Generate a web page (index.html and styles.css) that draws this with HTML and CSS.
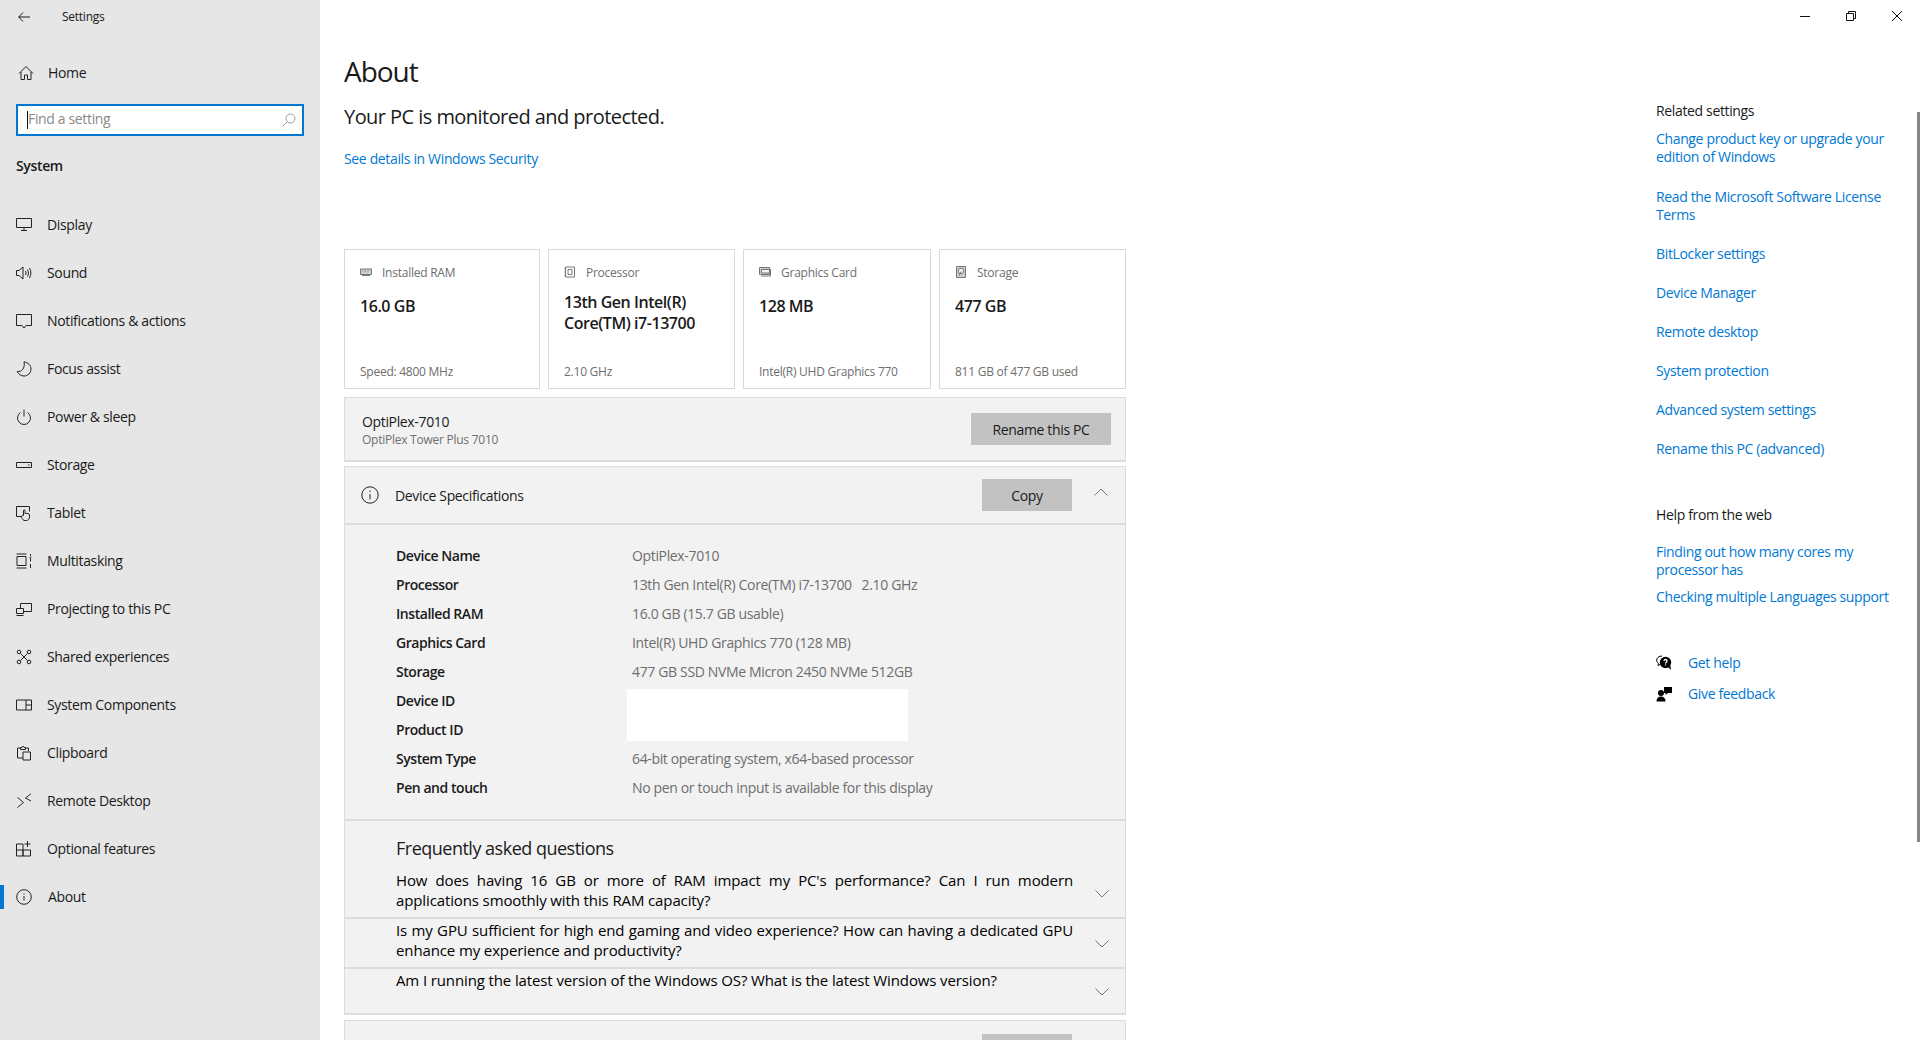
FILE: index.html
```html
<!DOCTYPE html>
<html lang="en">
<head>
<meta charset="utf-8">
<title>Settings</title>
<link rel="stylesheet" href="styles.css">
</head>
<body>
<aside class="sidebar">
  <div class="titlebar">
    <svg class="back" viewBox="0 0 12 10"><path d="M12 5H.7M5 .5.7 5 5 9.5"/></svg>
    <span>Settings</span>
  </div>
  <a class="nav home"><svg class="ni" viewBox="0 0 16 16"><path d="M1 8.500 8 1.500l7 7M3 7v7.500h3.500V10h3v4.500H13V7"/></svg><span>Home</span></a>
  <div class="search"><span class="caret"></span><span class="ph">Find a setting</span><svg class="si" viewBox="0 0 14 14"><circle cx="8.500" cy="5.500" r="4.500"/><path d="M5.200 8.800.8 13.200"/></svg></div>
  <div class="group">System</div>
  <nav class="navlist">
    <a class="nav"><svg class="ni" viewBox="0 0 16 16"><path d="M.5 1.500h15v9H.5zM8 10.500V13M5 13.500h6"/></svg><span>Display</span></a>
    <a class="nav"><svg class="ni" viewBox="0 0 16 16"><path d="M.5 5.500h2.500L7 2v12L3 10.500H.5zM9.500 6c.7 1.300.7 2.700 0 4M11.500 4.500c1.300 2.200 1.300 4.800 0 7M13.500 3c1.900 3.200 1.900 6.800 0 10"/></svg><span>Sound</span></a>
    <a class="nav"><svg class="ni" viewBox="0 0 16 16"><path d="M.5 1.500h15v11H10l-2 2.500-2-2.500H.5z"/></svg><span>Notifications &amp; actions</span></a>
    <a class="nav"><svg class="ni" viewBox="0 0 16 16"><path d="M8 .8c4 .7 7 3.500 7 7.200 0 4-3.200 7-7 7-3 0-5.800-1.900-6.800-4.700C5 11.500 9.500 7.500 8 .8z"/></svg><span>Focus assist</span></a>
    <a class="nav"><svg class="ni" viewBox="0 0 16 16"><path d="M8 .5v7M4.500 3.500a6.500 6.500 0 1 0 7 0"/></svg><span>Power &amp; sleep</span></a>
    <a class="nav"><svg class="ni" viewBox="0 0 16 16"><path d="M.5 5.500h15v5H.5zM12 8h1.500"/></svg><span>Storage</span></a>
    <a class="nav"><svg class="ni" viewBox="0 0 16 16"><path d="M6 11.500H.5v-10h13v5M8 15.500c-1.500-1-2.500-2.500-2.500-4 0-1 1-1.500 2-1V5.500c0-1 1.500-1 1.500 0v3c2-.3 4.500 0 4.500 1.500v2c0 1.500-1 3.500-3 3.500z"/></svg><span>Tablet</span></a>
    <a class="nav"><svg class="ni" viewBox="0 0 16 16"><path d="M.5 1h10M.5 15h10M1 3.500h9v9H1zM14.500 1v2M14.500 6v2.500M14.500 11v4"/><circle cx="14.500" cy="4.800" r=".6"/></svg><span>Multitasking</span></a>
    <a class="nav"><svg class="ni" viewBox="0 0 16 16"><path d="M4.500 7V2.500h11v8H8M.5 7.500h7v5H.5zM.5 14.500h7"/></svg><span>Projecting to this PC</span></a>
    <a class="nav"><svg class="ni" viewBox="0 0 16 16"><circle cx="3" cy="3" r="1.800"/><circle cx="13" cy="3" r="1.800"/><circle cx="3" cy="13" r="1.800"/><circle cx="13" cy="13" r="1.800"/><path d="M4.300 4.300l7.400 7.400M11.700 4.300l-7.400 7.400"/></svg><span>Shared experiences</span></a>
    <a class="nav"><svg class="ni" viewBox="0 0 16 16"><path d="M.5 3h15v10H.5zM10 3v10M10 8h5.500"/></svg><span>System Components</span></a>
    <a class="nav"><svg class="ni" viewBox="0 0 16 16"><path d="M7 13H1.500V3H4M10 3h2.500v3M4.500 4.500V2.500H6C6 .8 8 .8 8 2.500h1.500v2zM7 7h7.500v8H7z"/></svg><span>Clipboard</span></a>
    <a class="nav"><svg class="ni" viewBox="0 0 16 16"><path d="M1.500 4.500l6 5-6 5M15 .8 9.500 5l5.500 3"/></svg><span>Remote Desktop</span></a>
    <a class="nav"><svg class="ni" viewBox="0 0 16 16"><path d="M.5 3h6.500v12H.5zM7 9h7.500v6H7zM.5 9H7M11.500 0v6M8.500 3h6"/></svg><span>Optional features</span></a>
    <a class="nav active"><svg class="ni" viewBox="0 0 16 16"><circle cx="8" cy="8" r="7.300"/><path d="M8 7v4.500M8 4.300v1.200"/></svg><span>About</span></a>
  </nav>
</aside>

<main class="main">
  <section class="content">
    <h1>About</h1>
    <h2>Your PC is monitored and protected.</h2>
    <a class="link details">See details in Windows Security</a>

    <div class="cards">
      <div class="card c1">
        <div class="clabel"><svg class="ci" viewBox="0 0 12 12"><path class="ram" d="M.5 3h11v5.500H.5z"/><path class="sg" d="M2.500 5h1M5 5h1M7.500 5h1M2 9.500h8"/></svg>Installed RAM</div>
        <div class="cval">16.0 GB</div>
        <div class="cfoot">Speed: 4800 MHz</div>
      </div>
      <div class="card c2">
        <div class="clabel"><svg class="ci" viewBox="0 0 12 12"><path class="sg" d="M1.500 1h9v10h-9zM4 3.500h4v5H4zM.3 3h1.200M.3 6h1.200M.3 9h1.200"/></svg>Processor</div>
        <div class="cval two">13th Gen Intel(R)<br>Core(TM) i7-13700</div>
        <div class="cfoot">2.10 GHz</div>
      </div>
      <div class="card c3">
        <div class="clabel"><svg class="ci" viewBox="0 0 12 12"><path class="ram" d="M.5 1.500h10v7h-10z"/><path class="wf" d="M2.500 3.500h8v3.500h-8z"/><path class="sg" d="M11.500 3v7H2"/></svg>Graphics Card</div>
        <div class="cval">128 MB</div>
        <div class="cfoot">Intel(R) UHD Graphics 770</div>
      </div>
      <div class="card c4">
        <div class="clabel"><svg class="ci" viewBox="0 0 12 12"><path class="ram" d="M1.500.5h9v11h-9z"/><circle class="wc" cx="6" cy="5" r="2.800"/><path class="sg" d="M4 9.500 6 5.500"/></svg>Storage</div>
        <div class="cval">477 GB</div>
        <div class="cfoot">811 GB of 477 GB used</div>
      </div>
    </div>

    <div class="panel rename">
      <div class="pcname"><div class="n1">OptiPlex-7010</div><div class="n2">OptiPlex Tower Plus 7010</div></div>
      <button class="btn wide">Rename this PC</button>
    </div>

    <div class="panel spec">
      <div class="spechead">
        <svg class="infoi" viewBox="0 0 18 18"><circle cx="9" cy="9" r="8.200"/><path d="M9 8v5.500M9 4.500V6"/></svg>
        <span class="spectitle">Device Specifications</span>
        <button class="btn copy">Copy</button>
        <svg class="chev up" viewBox="0 0 14 8"><path d="M.5 7.500 7 1l6.500 6.500"/></svg>
      </div>
      <div class="specbody">
        <div class="row"><b>Device Name</b><span>OptiPlex-7010</span></div>
        <div class="row"><b>Processor</b><span>13th Gen Intel(R) Core(TM) i7-13700 &nbsp; 2.10 GHz</span></div>
        <div class="row"><b>Installed RAM</b><span>16.0 GB (15.7 GB usable)</span></div>
        <div class="row"><b>Graphics Card</b><span>Intel(R) UHD Graphics 770 (128 MB)</span></div>
        <div class="row"><b>Storage</b><span>477 GB SSD NVMe Micron 2450 NVMe 512GB</span></div>
        <div class="row"><b>Device ID</b><span></span></div>
        <div class="row"><b>Product ID</b><span></span></div>
        <div class="row"><b>System Type</b><span>64-bit operating system, x64-based processor</span></div>
        <div class="row"><b>Pen and touch</b><span>No pen or touch input is available for this display</span></div>
        <div class="redact"></div>
      </div>
      <div class="faq">
        <h3>Frequently asked questions</h3>
        <div class="q q1"><p>How does having 16 GB or more of RAM impact my PC's performance? Can I run modern applications smoothly with this RAM capacity?</p><svg class="chev" viewBox="0 0 14 8"><path d="M.5.5 7 7l6.500-6.500"/></svg></div>
        <div class="q q2"><p>Is my GPU sufficient for high end gaming and video experience? How can having a dedicated GPU enhance my experience and productivity?</p><svg class="chev" viewBox="0 0 14 8"><path d="M.5.5 7 7l6.500-6.500"/></svg></div>
        <div class="q q3"><p>Am I running the latest version of the Windows OS? What is the latest Windows version?</p><svg class="chev" viewBox="0 0 14 8"><path d="M.5.5 7 7l6.500-6.500"/></svg></div>
      </div>
    </div>

    <div class="panel next"><div class="stub"></div></div>
  </section>

  <section class="related">
    <h4>Related settings</h4>
    <a class="link wide1">Change product key or upgrade your<br>edition of Windows</a>
    <a class="link">Read the Microsoft Software License<br>Terms</a>
    <a class="link">BitLocker settings</a>
    <a class="link">Device Manager</a>
    <a class="link">Remote desktop</a>
    <a class="link">System protection</a>
    <a class="link">Advanced system settings</a>
    <a class="link">Rename this PC (advanced)</a>
    <h4 class="web">Help from the web</h4>
    <a class="link tight">Finding out how many cores my<br>processor has</a>
    <a class="link tight">Checking multiple Languages support</a>
    <div class="help">
      <a class="link"><svg class="hi" viewBox="0 0 16 16"><path class="hs" d="M6 1C3 1 .7 2.800.7 5.200c0 1.300.7 2.400 1.700 3.200L2 10.500l2.500-1.200"/><circle class="hf" cx="9.500" cy="7.500" r="5.700"/><path class="hf" d="M12 12l3 3-.5-4z"/><path class="hw" d="M8 6c0-2 3-2 3 0 0 1.200-1.500 1.200-1.500 2.500M9.500 9.500v1"/></svg>Get help</a>
      <a class="link"><svg class="hi" viewBox="0 0 16 16"><circle class="hf" cx="5" cy="7" r="3"/><path class="hf" d="M.5 15.500c0-3 1.500-5 4.500-5s4.500 2 4.500 5z"/><path class="hf" d="M8 1h8v6h-4l-2.500 2V7H8z"/></svg>Give feedback</a>
    </div>
  </section>
</main>

<div class="winctl">
  <svg viewBox="0 0 10 10"><path d="M0 5.500h10"/></svg>
  <svg viewBox="0 0 10 10"><path d="M.5 2.500h7v7h-7zM2.500 2.500v-2h7v7h-2"/></svg>
  <svg viewBox="0 0 10 10"><path d="M0 0l10 10M10 0 0 10"/></svg>
</div>
<div class="scrollbar"></div>
</body>
</html>
```

FILE: styles.css
```css
* { box-sizing: border-box; }
html, body { height: 100%; }
body {
  margin: 0;
  display: flex;
  height: 1040px;
  overflow: hidden;
  background: #fff;
  color: #1a1a1a;
  font-family: "Open Sans", "Noto Sans", sans-serif;
  font-size: 14px;
  letter-spacing: -0.35px;
}
svg { fill: none; stroke: currentColor; stroke-width: 1; flex: none; display: block; }

.sidebar { width: 320px; flex: none; background: #e6e6e6; display: flex; flex-direction: column; position: relative; }
.titlebar { height: 33px; display: flex; align-items: center; font-size: 12px; padding-left: 18px; letter-spacing: -0.25px; }
.back { width: 12px; height: 10px; margin-right: 32px; }
.nav { display: flex; align-items: center; height: 48px; padding-left: 16px; position: relative; }
.nav span { margin-left: 15px; font-size: 14px; line-height: 20px; }
.ni { width: 16px; height: 16px; color: #222; }
.home { height: 24px; margin-top: 28px; padding-left: 18px; }
.home .ni { margin-right: -1px; }
.search {
  margin: 19px 16px 0; height: 32px; border: 2px solid #0078d4; background: #fff;
  display: flex; align-items: center; padding: 0 6px 0 9px; color: #8a8a8a;
}
.caret { width: 1px; height: 18px; background: #111; }
.ph { flex: 1; font-size: 14px; line-height: 18px; margin-top: -2px; }
.si { width: 14px; height: 14px; color: #999; }
.group { margin: 20px 0 0 16px; font-size: 14px; font-weight: 600; line-height: 20px; }
.navlist { margin-top: 25px; }
.active::before { content: ""; position: absolute; left: 0; top: 12px; width: 4px; height: 24px; background: #0078d4; }
.active span { margin-left: 16px; }

.main { flex: 1; display: flex; padding: 52px 0 0 24px; min-width: 0; }
.content { width: 782px; flex: none; }
h1 { margin: 0; font-size: 28px; font-weight: 400; line-height: 39px; letter-spacing: -1.05px; }
h2 { margin: 12px 0 0; font-size: 20px; font-weight: 400; line-height: 28px; letter-spacing: -0.55px; }
.link { color: #0078d4; display: block; font-size: 14px; line-height: 18px; }
.details { margin-top: 19px; }

.cards { display: flex; gap: 8px; margin-top: 81px; }
.card { height: 140px; background: #fff; border: 1px solid #d9d9d9; padding: 14px 15px 0; display: flex; flex-direction: column; }
.c1 { width: 196px; } .c2 { width: 187px; } .c3 { width: 188px; } .c4 { width: 187px; }
.clabel { display: flex; align-items: center; font-size: 12px; color: #6e6e6e; line-height: 18px; letter-spacing: -0.25px; }
.ci { width: 12px; height: 12px; margin-right: 10px; margin-top: -2px; }
.sg { stroke: #777; }
.ram { stroke: #777; fill: #cfcfcf; }
.wf { fill: #f4f4f4; stroke: #777; }
.wc { fill: #f4f4f4; stroke: #777; }
.cval { font-size: 16px; font-weight: 600; line-height: 21px; margin-top: 14px; letter-spacing: -0.45px; flex: 1; }
.cval.two { margin-top: 10px; }
.cfoot { font-size: 12px; color: #6e6e6e; line-height: 18px; margin-bottom: 7px; letter-spacing: -0.25px; }

.panel { background: #f2f2f2; border: 1px solid #dcdcdc; border-bottom-width: 2px; }
.rename { margin-top: 8px; height: 65px; display: flex; align-items: center; justify-content: space-between; padding: 0 14px 0 17px; }
.pcname { margin-top: 3px; }
.n1 { line-height: 18px; font-size: 14px; }
.n2 { line-height: 18px; font-size: 12px; color: #6e6e6e; letter-spacing: -0.25px; }
.btn { border: 0; background: #c2c2c2; color: #1a1a1a; font: inherit; letter-spacing: inherit; font-size: 14px; height: 32px; padding: 0; }
.wide { width: 140px; }
.copy { width: 90px; }

.spec { margin-top: 4px; border-bottom-width: 2px; }
.spechead { height: 58px; display: flex; align-items: center; padding-left: 16px; border-bottom: 2px solid #dcdcdc; }
.infoi { width: 18px; height: 18px; color: #222; }
.spectitle { margin-left: 16px; flex: 1; }
.chev { width: 14px; height: 8px; color: #777; }
.up { margin: -6px 17px 0 22px; }
.specbody { position: relative; padding: 16px 0 17px 51px; border-bottom: 2px solid #dcdcdc; }
.row { display: flex; height: 29px; align-items: center; }
.row b { width: 236px; font-weight: 600; letter-spacing: -0.45px; }
.row span { color: #6e6e6e; }
.redact { position: absolute; left: 282px; top: 164px; width: 281px; height: 52px; background: #fff; }

.faq { padding-top: 15px; }
h3 { margin: 0 0 10px 51px; font-size: 18px; line-height: 24px; font-weight: 400; letter-spacing: -0.5px; }
.q { display: flex; padding: 0 15px 0 51px; align-items: flex-start; }
.q p { margin: 0; width: 677px; font-size: 15px; font-weight: 500; line-height: 20px; text-align: justify; letter-spacing: -0.12px; color: #000; }
.q .chev { margin: 20px 0 0 22px; }
.q1 { height: 49px; border-bottom: 2px solid #dcdcdc; }
.q2 { height: 50px; padding-top: 1px; border-bottom: 2px solid #dcdcdc; }
.q3 { height: 44px; padding-top: 1px; }
.q3 .chev { margin-top: 18px; }

.next { margin-top: 5px; height: 60px; padding: 13px 0 0 637px; }
.stub { width: 90px; height: 32px; background: #c2c2c2; }

.related { margin-left: 530px; width: 240px; flex: none; padding-top: 50px; }
h4 { margin: 0 0 10px; font-size: 14px; font-weight: 400; line-height: 18px; }
.related > .link { margin-bottom: 21px; }
.related > .link.wide1 { margin-bottom: 22px; }
.related > .link.tight { margin-bottom: 9px; }
h4.web { margin-top: 48px; margin-bottom: 19px; }
.help { margin-top: 48px; display: flex; flex-direction: column; gap: 13px; }
.help .link { display: flex; align-items: center; }
.hi { width: 16px; height: 16px; margin-right: 16px; }
.hs { stroke: #000; }
.hf { fill: #000; stroke: none; }
.hw { stroke: #fff; stroke-width: 1.300; }

.winctl { position: absolute; top: 11px; right: 0; display: flex; gap: 36px; padding-right: 18px; color: #111; }
.winctl svg { width: 10px; height: 10px; }
.scrollbar { position: absolute; right: 0; top: 112px; width: 3px; height: 730px; background: #868686; }
```
